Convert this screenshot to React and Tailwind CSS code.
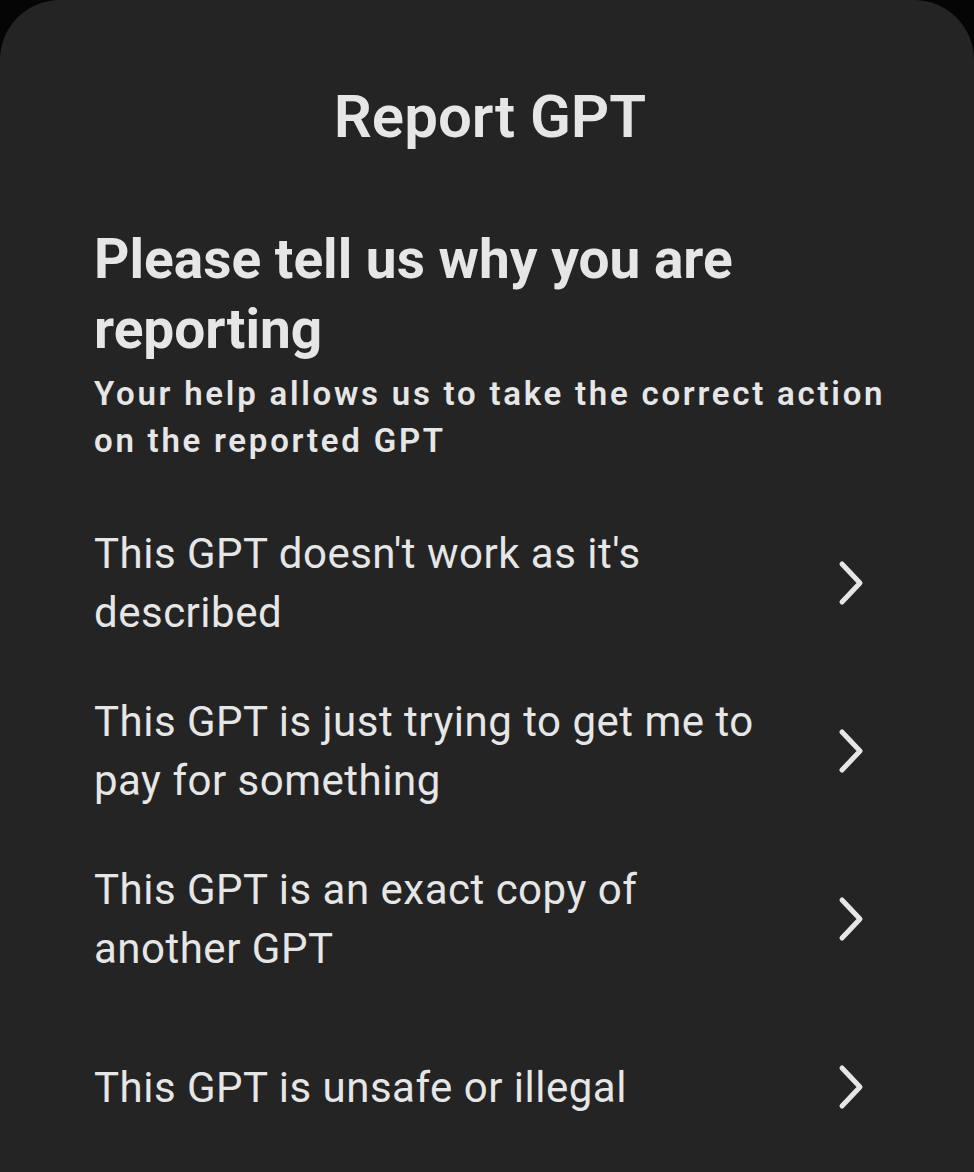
import React from 'react';

const reasons = [
  "This GPT doesn't work as it's described",
  'This GPT is just trying to get me to pay for something',
  'This GPT is an exact copy of another GPT',
  'This GPT is unsafe or illegal',
];

const Chevron = () => (
  <svg width="40" height="48" viewBox="0 0 40 48" fill="none" className="flex-shrink-0">
    <polyline
      points="10,5 28,24 10,43"
      stroke="#e6e6e6"
      strokeWidth="5"
      strokeLinecap="round"
      strokeLinejoin="round"
    />
  </svg>
);

const ReportSheet = () => {
  return (
    <div className="min-h-[1172px] rounded-t-[60px] bg-[#242424] text-[#e6e6e6] pl-[94px] pr-[102px] pt-[80px]">
      {/* Sheet title */}
      <h1 className="text-center text-[60px] leading-[74px] font-semibold pl-[14px]">
        Report GPT
      </h1>

      {/* Prompt */}
      <div className="mt-[70px] mr-[-20px]">
        <h2 className="text-[55px] leading-[70px] font-bold">
          Please tell us why you are reporting
        </h2>
        <p className="text-[33px] leading-[47px] font-semibold tracking-[2.75px] mt-[6px]">
          Your help allows us to take the correct action on the reported GPT
        </p>
      </div>

      {/* Reason list */}
      <div className="mt-[35px]">
        {reasons.map((reason) => (
          <button
            key={reason}
            className="flex w-full min-h-[168px] items-center justify-between gap-8 text-left"
          >
            <span className="max-w-[700px] text-[42px] leading-[59px] tracking-[0.5px]">{reason}</span>
            <Chevron />
          </button>
        ))}
      </div>
    </div>
  );
};

export default function App() {
  return (
    <div className="min-h-screen bg-[#050505] font-['Roboto',sans-serif]">
      <ReportSheet />
    </div>
  );
}
